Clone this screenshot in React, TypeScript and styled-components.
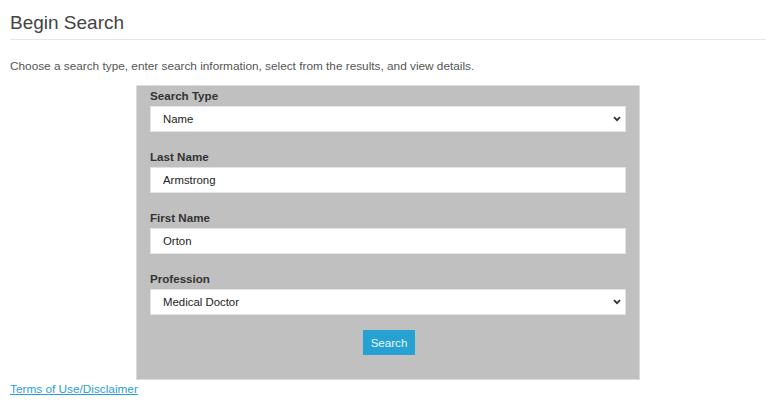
import React from 'react';
import styled, { createGlobalStyle } from 'styled-components';

const GlobalStyle = createGlobalStyle`
  html, body {
    margin: 0;
    padding: 0;
    background: #ffffff;
    font-family: "Liberation Sans", Arial, sans-serif;
  }
`;

// ページ全体
const Page = styled.div`
  padding: 0 2px 0 10px;
`;

const Title = styled.h1`
  margin: 0;
  padding: 12px 0 5px;
  font-size: 19px;
  font-weight: 400;
  line-height: 22px;
  color: #444444;
  border-bottom: 1px solid #e6e6e6;
`;

const Intro = styled.p`
  margin: 18px 0 11px;
  font-size: 11.8px;
  line-height: 16px;
  color: #555555;
`;

// 検索フォームのパネル
const Panel = styled.form`
  width: 504px;
  box-sizing: border-box;
  margin: 0 auto;
  padding: 0 13px 24px;
  background: #c0c0c0;
  border: 1px solid #dcdcdc;
  display: flex;
  flex-direction: column;
  gap: 15px;
`;

const Field = styled.div`
  display: flex;
  flex-direction: column;
`;

const Label = styled.label`
  font-size: 11.6px;
  font-weight: 700;
  line-height: 20px;
  color: #333333;
`;

const controlCss = `
  box-sizing: border-box;
  width: 100%;
  height: 26px;
  margin: 0;
  padding: 0 12px;
  border: 1px solid #e4e4e4;
  border-radius: 0;
  background: #ffffff;
  font-family: "Liberation Sans", Arial, sans-serif;
  font-size: 11.4px;
  color: #222222;
  outline: none;
`;

const TextInput = styled.input`
  ${controlCss}
`;

const SelectWrap = styled.div`
  position: relative;
`;

const Select = styled.select`
  ${controlCss}
  appearance: none;
  -webkit-appearance: none;
`;

const Chevron = styled.svg`
  position: absolute;
  right: 5px;
  top: 10px;
  width: 8px;
  height: 6px;
  pointer-events: none;
`;

const Actions = styled.div`
  display: flex;
  justify-content: center;
`;

const SearchButton = styled.button`
  width: 52px;
  height: 25px;
  margin-left: 2px;
  padding: 0;
  border: none;
  border-radius: 0;
  background: #26a1d3;
  color: #eaf6fb;
  font-family: "Liberation Sans", Arial, sans-serif;
  font-size: 11.6px;
  cursor: pointer;
`;

const Footer = styled.div`
  padding-top: 1px;
  font-size: 11.8px;
  line-height: 16px;
`;

const FooterLink = styled.a`
  color: #2a9fd6;
  text-decoration: underline;
`;

const DropdownIcon: React.FC = () => (
  <Chevron viewBox="0 0 8 6">
    <path d="M1 1.2 L4 4.2 L7 1.2" fill="none" stroke="#333" strokeWidth="1.8" />
  </Chevron>
);

const App: React.FC = () => {
  return (
    <Page>
      <GlobalStyle />
      <Title>Begin Search</Title>
      <Intro>
        Choose a search type, enter search information, select from the results, and view details.
      </Intro>
      <Panel onSubmit={e => e.preventDefault()}>
        <Field>
          <Label>Search Type</Label>
          <SelectWrap>
            <Select defaultValue="name">
              <option value="name">Name</option>
              <option value="license">License Number</option>
            </Select>
            <DropdownIcon />
          </SelectWrap>
        </Field>
        <Field>
          <Label>Last Name</Label>
          <TextInput defaultValue="Armstrong" />
        </Field>
        <Field>
          <Label>First Name</Label>
          <TextInput defaultValue="Orton" />
        </Field>
        <Field>
          <Label>Profession</Label>
          <SelectWrap>
            <Select defaultValue="md">
              <option value="md">Medical Doctor</option>
              <option value="do">Osteopathic Physician</option>
            </Select>
            <DropdownIcon />
          </SelectWrap>
        </Field>
        <Actions>
          <SearchButton type="submit">Search</SearchButton>
        </Actions>
      </Panel>
      <Footer>
        <FooterLink href="#">Terms of Use/Disclaimer</FooterLink>
      </Footer>
    </Page>
  );
};

export default App;
